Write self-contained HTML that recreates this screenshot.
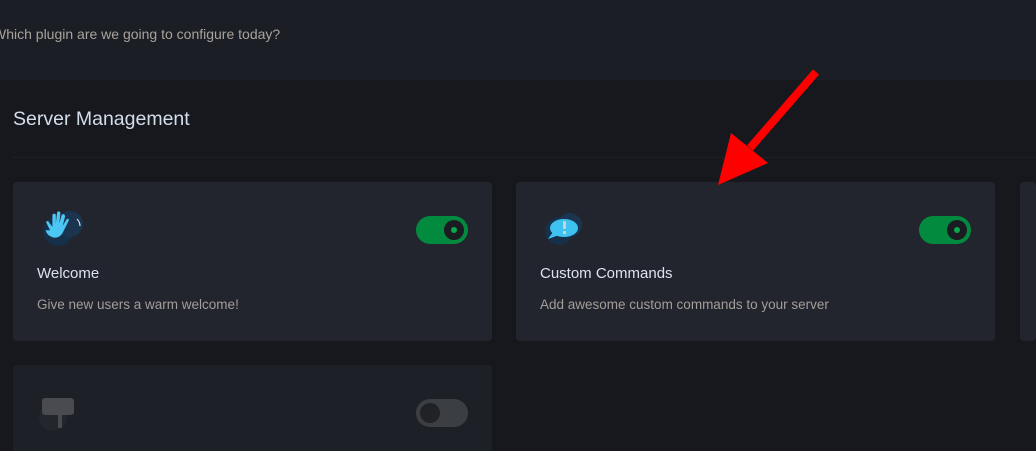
<!DOCTYPE html>
<html><head><meta charset="utf-8"><style>
*{margin:0;padding:0;box-sizing:border-box}
html,body{width:1036px;height:451px;overflow:hidden}
body{background:#17181d;font-family:"Liberation Sans",sans-serif;position:relative}
.top{position:absolute;left:0;top:0;width:1036px;height:80px;background:#1c1e26}
.top span{position:absolute;left:-7px;top:26px;font-size:14px;color:#a8a29a}
h2{position:absolute;left:13px;top:108px;font-size:19.5px;font-weight:normal;color:#d3deeb}
.div{position:absolute;left:13px;right:0;top:157px;height:1px;background:#1e2027}
.card{position:absolute;width:479px;height:159px;background:#22242e;border-radius:4px;overflow:hidden}
.card .t{position:absolute;left:24px;top:83px;font-size:15px;color:#dbe3ef}
.card .d{position:absolute;left:24px;top:115px;font-size:13.5px;color:#a39e98}
.tog{position:absolute;left:403px;top:34px;width:52px;height:28px;border-radius:14px;background:#028a3e}
.tog:after{content:"";position:absolute;right:4px;top:4px;width:20px;height:20px;border-radius:50%;background:#1a1c22}
.tog:before{content:"";position:absolute;right:11px;top:11px;width:6px;height:6px;border-radius:50%;background:#07a94a;z-index:2}
.tog.off{background:#3b3e43}
.tog.off:after{left:4px;right:auto;background:#202226}
.tog.off:before{display:none}
.ic{position:absolute;left:24px;top:26px}
</style></head><body>
<div class="top"><span>Which plugin are we going to configure today?</span></div>
<h2>Server Management</h2>
<div class="div"></div>
<div class="card" style="left:13px;top:182px">
 <svg class="ic" width="50" height="44" viewBox="0 0 50 44"><circle cx="21" cy="23" r="15" fill="#16304a"/><circle cx="33" cy="16" r="13" fill="#1b3550"/>
 <path d="M40 11a10 10 0 0 1 3 7" stroke="#cfe3f5" stroke-width="1.2" fill="none"/>
 <g transform="translate(-3,-3) scale(1.15)"><path d="M14 22l-3-6c-1-2 1-3 2-1l3 4 0-10c0-2 3-2 3 0v7l1-9c0-2 3-2 3 0l-1 9 2-7c1-2 3-1 3 1l-2 8 3-5c1-2 3-1 2 1l-5 10c-2 4-6 5-9 4-3-1-5-3-6-6z" fill="#4cc6f2"/></g></svg>
 <div class="tog"></div>
 <div class="t">Welcome</div><div class="d">Give new users a warm welcome!</div>
</div>
<div class="card" style="left:516px;top:182px">
 <svg class="ic" width="50" height="44" viewBox="0 0 50 44"><circle cx="19" cy="23" r="14" fill="#16304a"/><circle cx="30" cy="17" r="12" fill="#1b3550"/>
 <ellipse cx="24" cy="20" rx="14" ry="9" fill="#3ec2ef"/><path d="M13 24l-5 7 11-4z" fill="#3ec2ef"/>
 <rect x="23" y="13" width="3" height="8" rx="1" fill="#c9d0d6"/><rect x="23" y="23" width="3" height="3" fill="#c9d0d6"/></svg>
 <div class="tog"></div>
 <div class="t">Custom Commands</div><div class="d">Add awesome custom commands to your server</div>
</div>
<div class="card" style="left:1020px;top:182px;width:16px"></div>
<div class="card" style="left:13px;top:365px;height:86px;background:#1e2028;border-radius:4px 4px 0 0">
 <svg class="ic" width="50" height="44" viewBox="0 0 50 44" style="top:30px"><circle cx="16" cy="22" r="14" fill="#24262d"/><rect x="5" y="3" width="32" height="17" rx="3" fill="#4a4b50"/><rect x="21" y="18" width="4" height="15" rx="1" fill="#4a4b50"/></svg>
 <div class="tog off"></div>
</div>
<svg style="position:absolute;left:0;top:0" width="1036" height="451">
 <line x1="816" y1="72" x2="750" y2="148" stroke="#ff0000" stroke-width="8"/>
 <polygon points="718,185 731,133 768,163" fill="#ff0000"/>
</svg>
</body></html>
